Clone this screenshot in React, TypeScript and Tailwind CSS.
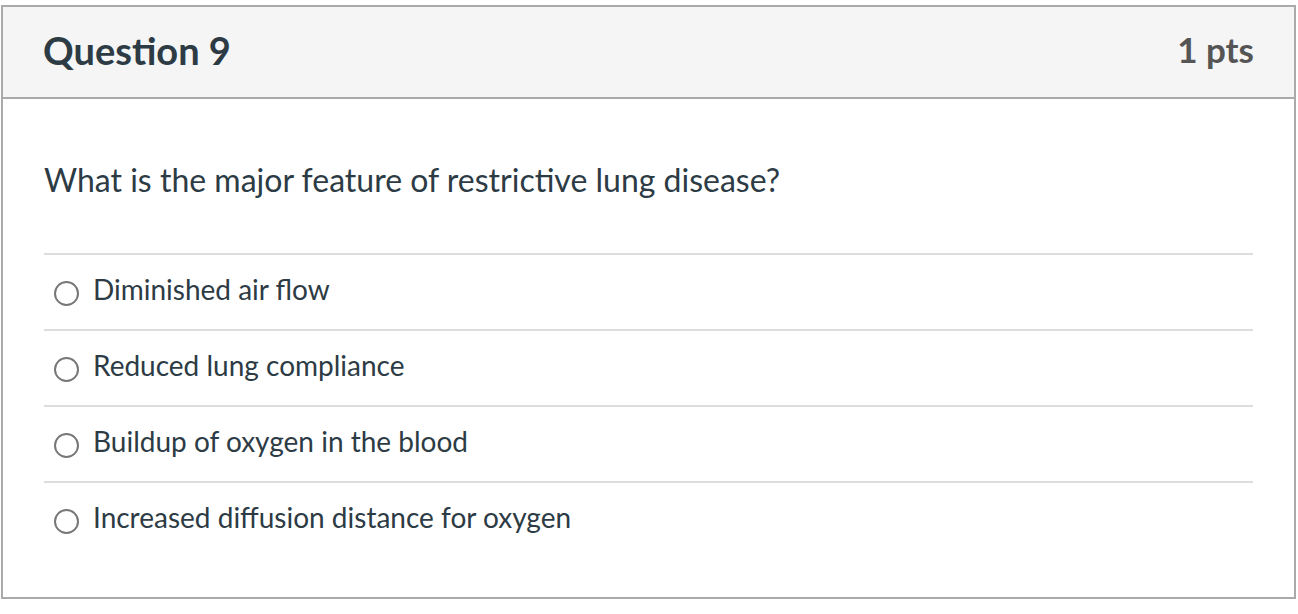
import React from "react";

const answers = [
  "Diminished air flow",
  "Reduced lung compliance",
  "Buildup of oxygen in the blood",
  "Increased diffusion distance for oxygen",
];

export default function App() {
  return (
    <div className="min-h-screen bg-white pt-[5px] pl-px" style={{ fontFamily: "Lato, 'Noto Sans', sans-serif" }}>
      <div className="w-[1295px] h-[594px] border-2 border-[#aaaaaa] flex flex-col">
        {/* Header */}
        <div className="h-[92px] bg-[#f5f5f5] border-b-2 border-[#aaaaaa] flex items-center justify-between px-[40px] pb-[5px]">
          <h2 className="text-[38px] font-bold text-[#2d3b45] leading-none">Question 9</h2>
          <span className="text-[35px] font-bold text-[#555555] leading-none">1 pts</span>
        </div>

        {/* Body */}
        <div className="px-[41px] pt-[61px]">
          <p className="text-[32px] text-[#2d3b45] leading-[40px]">
            What is the major feature of restrictive lung disease?
          </p>

          <div className="mt-[53px]">
            {answers.map((a) => (
              <label key={a} className="h-[76px] border-t-2 border-[#dddddd] flex items-center">
                <span className="ml-[10px] mt-[2px] w-[25px] h-[25px] rounded-full border-2 border-[#777777] bg-white shrink-0" />
                <span className="ml-[14px] pb-[6px] text-[28px] text-[#2d3b45] leading-none">{a}</span>
              </label>
            ))}
          </div>
        </div>
      </div>
    </div>
  );
}
